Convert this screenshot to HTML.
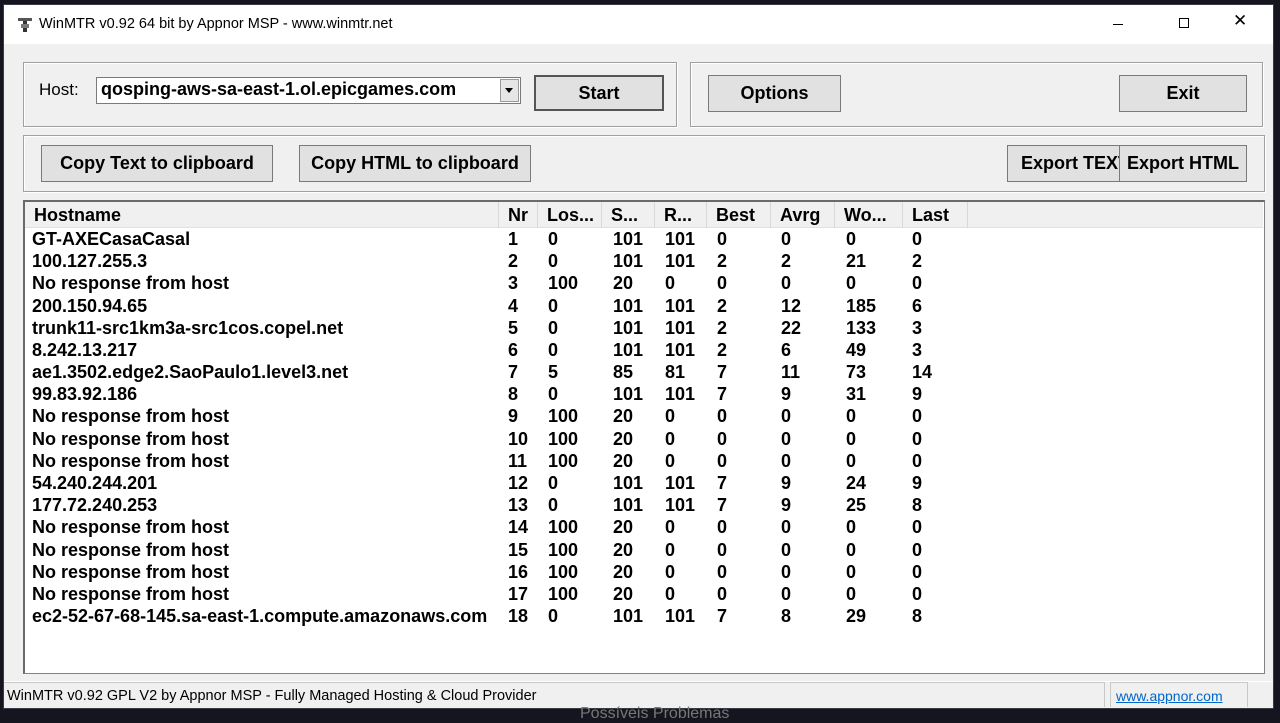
<!DOCTYPE html>
<html><head><meta charset="utf-8"><style>
*{box-sizing:border-box;margin:0;padding:0}
body{width:1280px;height:714px;background:#15151f;position:relative;overflow:hidden;font-family:"Liberation Sans Narrow","Liberation Sans",sans-serif}
.win{position:absolute;left:3px;top:4px;width:1271px;height:705px;background:#f0f0f0;border:1px solid #3a3a44}
.title{position:absolute;left:0;top:0;width:100%;height:39px;background:#fff;font-family:"Liberation Sans",sans-serif;font-size:14.5px;color:#000}
.title span{position:absolute;left:35px;top:11px}
.ab{position:absolute}
.grp{position:absolute;border:1px solid #a0a0a0;box-shadow:inset 1px 1px 0 #fff,1px 1px 0 #fff}
.btn{position:absolute;background:#e1e1e1;border:1px solid #7a7a7a;font-weight:bold;font-size:18px;text-align:center;color:#000;display:flex;align-items:center;justify-content:center;white-space:nowrap;overflow:hidden}
.t{position:absolute;font-weight:bold;font-size:18px;color:#000;white-space:nowrap}
.hd{position:absolute;top:0;height:26px;border-right:1px solid #d8d8d8;font-weight:bold;font-size:18px;padding:3px 0 0 9px;white-space:nowrap}
</style></head><body>
<div class="win">
<div class="title">
<svg class="ab" style="left:13px;top:12px" width="16" height="16" viewBox="0 0 16 16"><rect x="1" y="1" width="14" height="3" fill="#555"/><rect x="6" y="4" width="4" height="11" fill="#333"/><rect x="4" y="7" width="8" height="4" fill="#777"/></svg>
<span>WinMTR v0.92 64 bit by Appnor MSP - www.winmtr.net</span>
<div class="ab" style="left:1109px;top:19px;width:10px;height:1px;background:#000"></div>
<div class="ab" style="left:1175px;top:13px;width:10px;height:10px;border:1px solid #000"></div>
<div class="ab" style="left:1229px;top:6px;font-size:17px;font-family:'Liberation Sans';font-weight:300">✕</div>
</div>
</div>
<div class="grp" style="left:23px;top:62px;width:654px;height:65px"></div>
<div class="t" style="left:39px;top:80px;font-weight:normal;font-family:'Liberation Sans';font-size:17px">Host:</div>
<div class="ab" style="left:96px;top:77px;width:425px;height:27px;background:#fff;border:1px solid #7a7a7a"></div>
<div class="t" style="left:101px;top:79px">qosping-aws-sa-east-1.ol.epicgames.com</div>
<div class="ab" style="left:500px;top:79px;width:19px;height:23px;background:#e6e6e6;border:1px solid #999"></div>
<div class="ab" style="left:505px;top:88px;width:0;height:0;border-left:4px solid transparent;border-right:4px solid transparent;border-top:5px solid #000"></div>
<div class="btn" style="left:534px;top:75px;width:130px;height:36px;border:2px solid #555">Start</div>
<div class="grp" style="left:690px;top:62px;width:573px;height:65px"></div>
<div class="btn" style="left:708px;top:75px;width:133px;height:37px">Options</div>
<div class="btn" style="left:1119px;top:75px;width:128px;height:37px">Exit</div>
<div class="grp" style="left:23px;top:135px;width:1242px;height:57px"></div>
<div class="btn" style="left:41px;top:145px;width:232px;height:37px">Copy Text to clipboard</div>
<div class="btn" style="left:299px;top:145px;width:232px;height:37px">Copy HTML to clipboard</div>
<div class="btn" style="left:1007px;top:145px;width:113px;height:37px;justify-content:flex-start;padding-left:13px">Export TEXT</div>
<div class="btn" style="left:1119px;top:145px;width:128px;height:37px">Export HTML</div>
<div class="ab" style="left:23px;top:200px;width:1242px;height:474px;background:#fff;border:1px solid #828282;border-left:2px solid #6a6a6a;border-top:2px solid #6a6a6a"></div>
<div class="ab" style="left:25px;top:202px;width:1238px;height:26px;background:#f0f0f0;border-bottom:1px solid #e0e0e0">
<div class="hd" style="left:0;width:474px">Hostname</div>
<div class="hd" style="left:474px;width:39px">Nr</div>
<div class="hd" style="left:513px;width:64px">Los...</div>
<div class="hd" style="left:577px;width:53px">S...</div>
<div class="hd" style="left:630px;width:52px">R...</div>
<div class="hd" style="left:682px;width:64px">Best</div>
<div class="hd" style="left:746px;width:64px">Avrg</div>
<div class="hd" style="left:810px;width:68px">Wo...</div>
<div class="hd" style="left:878px;width:65px">Last</div>
</div>
<div id="rows"></div>
<div class="ab" style="left:4px;top:681px;width:1269px;height:27px;background:#f0f0f0;border-top:1px solid #fff"></div>
<div class="ab" style="left:4px;top:682px;width:1101px;height:25px;border:1px solid #c8c8c8;border-bottom:none;border-left:none"></div>
<div class="ab" style="left:1110px;top:682px;width:138px;height:25px;border:1px solid #c8c8c8;border-bottom:none"></div>
<div class="ab" style="left:7px;top:688px;font-family:'Liberation Sans';font-size:14.5px;color:#000">WinMTR v0.92 GPL V2 by Appnor MSP - Fully Managed Hosting &amp; Cloud Provider</div>
<div class="ab" style="left:1116px;top:688px;font-family:'Liberation Sans';font-size:14px;color:#0066cc;text-decoration:underline">www.appnor.com</div>
<div class="ab" style="left:580px;top:705px;font-family:'Liberation Sans';font-size:16px;color:#777">Possíveis Problemas</div>
<script>
var d=[["GT-AXECasaCasal",1,0,101,101,0,0,0,0],["100.127.255.3",2,0,101,101,2,2,21,2],["No response from host",3,100,20,0,0,0,0,0],["200.150.94.65",4,0,101,101,2,12,185,6],["trunk11-src1km3a-src1cos.copel.net",5,0,101,101,2,22,133,3],["8.242.13.217",6,0,101,101,2,6,49,3],["ae1.3502.edge2.SaoPaulo1.level3.net",7,5,85,81,7,11,73,14],["99.83.92.186",8,0,101,101,7,9,31,9],["No response from host",9,100,20,0,0,0,0,0],["No response from host",10,100,20,0,0,0,0,0],["No response from host",11,100,20,0,0,0,0,0],["54.240.244.201",12,0,101,101,7,9,24,9],["177.72.240.253",13,0,101,101,7,9,25,8],["No response from host",14,100,20,0,0,0,0,0],["No response from host",15,100,20,0,0,0,0,0],["No response from host",16,100,20,0,0,0,0,0],["No response from host",17,100,20,0,0,0,0,0],["ec2-52-67-68-145.sa-east-1.compute.amazonaws.com",18,0,101,101,7,8,29,8]];
var xs=[32,508,548,613,665,717,781,846,912],h="";
d.forEach(function(r,i){var y=229+i*22.18;r.forEach(function(v,j){h+='<div class="t" style="left:'+xs[j]+'px;top:'+y.toFixed(1)+'px">'+v+'</div>'})});
document.getElementById("rows").innerHTML=h;
</script>
</body></html>
